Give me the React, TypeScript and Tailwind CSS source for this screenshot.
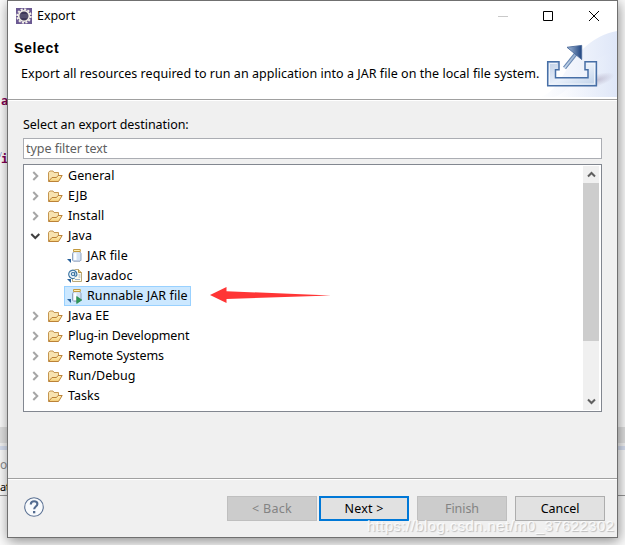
import React from "react";

const ui = "font-['Noto_Sans','Open_Sans',sans-serif]";

function Folder() {
  return (
    <svg width="16" height="14" viewBox="0 0 16 14" className="shrink-0">
      <defs>
        <linearGradient id="fold" x1="0" y1="0" x2="0" y2="1">
          <stop offset="0" stopColor="#fff0b8" />
          <stop offset="1" stopColor="#f5ce78" />
        </linearGradient>
      </defs>
      <path d="M1.5 12V3.5L2.8 2H6l1 1.5h4.5v4" fill="#f8e3b0" stroke="#c59650" strokeLinejoin="round" />
      <path d="M1.5 12.5 5 8.5h4.5L11 6.5h4.2L11.5 12.5Z" fill="url(#fold)" stroke="#bb8238" strokeLinejoin="round" />
    </svg>
  );
}

function Jar({ run = false }: { run?: boolean }) {
  return (
    <svg width="18" height="18" viewBox="0 0 18 18" className="shrink-0">
      <path d="M5.5 6.5 7 4.5h5.5l1.5 2v6.7l-1 1H6.5l-1-1Z" fill="#d5e3f5" stroke="#91a3bd" strokeLinejoin="round" />
      <path d="M8.3 6.2v6.8" stroke="#fff" strokeWidth="2.4" />
      <path d="M6.5 2.5h6.8v2H6.5z" fill="#fff1b5" stroke="#c29a40" />
      <path d="M0 12h4v4Z" fill="#27609b" />
      {run && <path d="M9.7 9.5V16.5L14.8 13Z" fill="#319a58" stroke="#23864b" strokeWidth=".7" />}
    </svg>
  );
}

function Javadoc() {
  return (
    <svg width="18" height="18" viewBox="0 0 18 18" className="shrink-0">
      <path d="M5.5 2.5h6l3 3v9h-9Z" fill="#fffbea" stroke="#b9a878" />
      <path d="M11.5 2.5v3h3" fill="#e7ca80" stroke="#b4924a" />
      <path d="M8 12.5h5M11.5 8h2M11.5 10h2" stroke="#9bb0ca" />
      <circle cx="6" cy="7" r="4.8" fill="#edf5fb" />
      <path d="M7.7 5.2v3.2c0 1.4 2.2 1.1 2.2-1a4.1 4.1 0 1 0-2 3.5" fill="none" stroke="#37719f" strokeWidth="1.1" />
      <circle cx="6" cy="7.1" r="1.6" fill="none" stroke="#37719f" strokeWidth="1.1" />
      <path d="M0 12h4v4Z" fill="#27609b" />
    </svg>
  );
}

function Chevron({ open = false }: { open?: boolean }) {
  return (
    <svg width="12" height="12" viewBox="0 0 12 12" className="shrink-0">
      <path
        d={open ? "M2.3 4l4 4 4-4" : "M4.3 2l4 4-4 4"}
        fill="none"
        stroke={open ? "#404040" : "#a6a6a6"}
        strokeWidth="2"
      />
    </svg>
  );
}

function Branch({ name, open }: { name: string; open?: boolean }) {
  return (
    <div className="flex h-5 items-center pl-[4px]">
      <Chevron open={open} />
      <div className="-mt-px ml-[6px] flex"><Folder /></div>
      <span className={"ml-[5px] " + (name.length > 10 ? "tracking-[-0.1px]" : "tracking-[0.05px]")}>{name}</span>
    </div>
  );
}

function Leaf({ name, icon, selected }: { name: string; icon: React.ReactNode; selected?: boolean }) {
  return (
    <div className="flex h-5 pl-[39px]">
      <div className={"flex h-5 items-center whitespace-nowrap border pl-[2px] " + (selected ? "w-[127px] border-[#99d1ff] bg-[#cce8ff]" : "border-transparent")}>
        {icon}
        <span className="ml-[2px] tracking-[0.07px]">{name}</span>
      </div>
    </div>
  );
}

function ExportBanner() {
  return (
    <svg width="78" height="68" viewBox="0 0 78 68" className="shrink-0">
      <defs>
        <linearGradient id="sweep" x1="0" y1="0" x2="1" y2="0">
          <stop offset="0" stopColor="#fff" />
          <stop offset="1" stopColor="#dfe7f8" />
        </linearGradient>
        <linearGradient id="tray" x1="0" y1="0" x2="1" y2="1">
          <stop offset="0" stopColor="#bfcfe6" />
          <stop offset=".5" stopColor="#e9f0fa" />
          <stop offset="1" stopColor="#bdd0e8" />
        </linearGradient>
        <linearGradient id="head" x1="0" y1="0" x2="1" y2="0">
          <stop offset="0" stopColor="#a9bfdb" />
          <stop offset="1" stopColor="#1f4480" />
        </linearGradient>
        <linearGradient id="shaft" gradientUnits="userSpaceOnUse" x1="25" y1="37" x2="38" y2="21">
          <stop offset="0" stopColor="#c9daec" />
          <stop offset="1" stopColor="#8ea9cb" />
        </linearGradient>
        <radialGradient id="trayShadow">
          <stop offset="0" stopColor="#a8a0b8" stopOpacity=".55" />
          <stop offset="1" stopColor="#a8a0b8" stopOpacity="0" />
        </radialGradient>
      </defs>
      <path d="M0 66C26 62 28 10 78 0V66Z" fill="url(#sweep)" />
      <path d="M15 66C38 59 44 25 78 21V66Z" fill="url(#sweep)" opacity=".75" />
      <ellipse cx="59" cy="49" rx="17" ry="6" transform="rotate(-18 59 49)" fill="url(#trayShadow)" />
      <path d="M8.7 30.7H20v8h-3.5v8h32.5v-8H46v-8h11.4v24H8.7Z" fill="url(#tray)" stroke="#476fa6" strokeWidth="1.5" />
      <path d="M10.5 53V32.5H18M47.5 32.5H55.5V53H10.5" fill="none" stroke="#f4f8fd" strokeOpacity=".8" />
      <path d="m25.5 37 12-15" stroke="#6887b3" strokeWidth="3.8" />
      <path d="m25.5 37 12-15" stroke="url(#shaft)" strokeWidth="1.8" />
      <path d="M28 16.3 42.7 14.4V28.5Z" fill="url(#head)" stroke="#49699a" strokeWidth=".9" />
    </svg>
  );
}

function Gear() {
  return (
    <svg width="16" height="16" viewBox="0 0 16 16">
      <path d="M0 0h16v16H0z" fill="#6b5992" />
      <circle cx="8" cy="8" r="6.7" fill="none" stroke="#f4f1e9" strokeWidth="2" strokeDasharray="2.1 1.4" />
      <circle cx="8" cy="8" r="5.3" fill="#3d3758" stroke="#f4f1e9" strokeWidth="1.6" />
      <path d="M4 7h8M4 9h8" stroke="#77718e" strokeWidth=".8" />
    </svg>
  );
}

function Action({ label, kind }: { label: string; kind: string }) {
  return (
    <button className={"flex h-[25px] w-[90px] items-center justify-center " + kind}>
      {label}
    </button>
  );
}

export default function App() {
  return (
    <div className={"relative h-[545px] w-[625px] overflow-hidden bg-[#f4f4f4] text-[12.5px] leading-5 tracking-[-0.05px] text-black " + ui}>
      {/* Editor window showing around the dialog */}
      <div className="absolute inset-0 flex flex-col">
        <div className="h-[427px] bg-[#fbfbfb]" />
        <div className="h-4 bg-[#e0e0e0]" />
        <div className="h-[3px] bg-[#f3f3f3]" />
        <div className="h-1 bg-[#d7dff0]" />
        <div className="h-[45px] bg-[#fbfbfb]" />
        <div className="h-px bg-[#969696]" />
        <div className="flex-1 bg-[#fbfbfb]" />
      </div>
      <span className="absolute left-[1px] top-[91px] font-['DejaVu_Sans_Mono',monospace] text-[12px] font-bold text-[#7f0055]">a</span>
      <svg className="absolute left-0 top-[152px]" width="2" height="6" viewBox="0 0 2 6"><path d="M0 5 1.5 0" stroke="#9fb4e8" /></svg>
      <span className="absolute left-[1px] top-[149px] font-['DejaVu_Sans_Mono',monospace] text-[12px] font-bold text-[#7f0055]">i</span>
      <span className="absolute left-0 top-[455px] text-[12px] text-[#8c8c8c]">o</span>
      <span className="absolute left-0 top-[477px] text-[11px] tracking-[-0.5px]">at</span>

      <main className="relative ml-[7px] flex h-[538px] w-[611px] flex-col border border-[#707070] bg-[#f0f0f0] shadow-[1px_3px_12px_rgba(0,0,0,0.45)]">
        <header className="flex h-[98px] shrink-0 bg-white">
          <div className="flex w-[531px] flex-col">
            <div className="flex h-[29px] items-center pl-2">
              <Gear />
              <span className="mt-px ml-[5px]">Export</span>
            </div>
            <h1 className="mt-[8px] h-5 pl-[6px] font-['Liberation_Sans',Arial,sans-serif] text-[14px] font-bold tracking-[0.7px]">Select</h1>
            <p className="mt-[6px] whitespace-nowrap pl-[13px] tracking-[0.035px]">Export all resources required to run an application into a JAR file on the local file system.</p>
          </div>
          <div className="flex w-[78px] flex-col">
            <div className="flex h-[30px] items-center justify-end pr-2">
              <svg width="120" height="28" viewBox="0 0 120 28" className="shrink-0" fill="none">
                <path d="M9 14.5h10" stroke="#c9c9c9" />
                <path d="M54.5 9.5h9v9h-9z" stroke="#000" />
                <path d="m100 9 10 10m0-10-10 10" stroke="#000" />
              </svg>
            </div>
            <ExportBanner />
          </div>
        </header>
        <div className="h-px shrink-0 bg-[#a0a0a0]" />
        <div className="h-px shrink-0 bg-white" />

        <section className="flex h-[377px] shrink-0 flex-col px-[15px] pt-[14px]">
          <label className="h-[23px]">Select an export destination:</label>
          <div className="flex h-[21px] items-center border border-[#abadb3] bg-white pl-[2px] text-[#606060]">type filter text</div>
          <div className="mt-[5px] flex h-[248px] border border-[#828790] bg-white p-px">
            <div className="relative flex-1">
              <Branch name="General" />
              <Branch name="EJB" />
              <Branch name="Install" />
              <Branch name="Java" open />
              <Leaf name="JAR file" icon={<Jar />} />
              <Leaf name="Javadoc" icon={<Javadoc />} />
              <Leaf name="Runnable JAR file" icon={<Jar run />} selected />
              <Branch name="Java EE" />
              <Branch name="Plug-in Development" />
              <Branch name="Remote Systems" />
              <Branch name="Run/Debug" />
              <Branch name="Tasks" />
              <svg className="absolute left-[185px] top-[120px]" width="122" height="18" viewBox="0 0 122 18">
                <path d="M0 9 16.5 1v4.2L121 9.5 16.5 13v4Z" fill="#ff3535" />
              </svg>
            </div>
            <div className="mr-px flex w-4 flex-col items-center bg-[#f0f0f0]">
              <div className="flex h-[17px] items-center">
                <svg width="9" height="7" viewBox="0 0 9 7"><path d="m1 5.5 3.5-3.5L8 5.5" fill="none" stroke="#606060" strokeWidth="2" /></svg>
              </div>
              <div className="h-[158px] w-full bg-[#cdcdcd]" />
              <div className="flex-1" />
              <div className="flex h-[17px] items-center">
                <svg width="9" height="7" viewBox="0 0 9 7"><path d="m1 1.5 3.5 3.5L8 1.5" fill="none" stroke="#606060" strokeWidth="2" /></svg>
              </div>
            </div>
          </div>
        </section>

        <div className="h-px shrink-0 bg-[#a0a0a0]" />
        <div className="h-px shrink-0 bg-white" />
        <footer className="flex pl-4 pr-3 pt-4">
          <svg width="20" height="20" viewBox="0 0 20 20" className="mt-[1px]" fill="none">
            <circle cx="10" cy="10" r="9.3" fill="#f8fafc" stroke="#5c7294" strokeWidth="1.1" />
            <path d="M6.8 7.4c0-2 1.3-3.1 3.3-3.1s3.3 1 3.3 2.7c0 2.5-3.2 2.5-3.2 5.2" stroke="#536b8f" strokeWidth="2.1" />
            <path d="M9 14h2.3v2.3H9z" fill="#536b8f" />
          </svg>
          <div className="ml-auto flex">
            <Action label="< Back" kind="border border-[#bfbfbf] bg-[#cccccc] text-[#838383] tracking-[0.3px]" />
            <Action label="Next >" kind="ml-[2px] border-2 border-[#0078d7] bg-[#e1e1e1] tracking-[0.2px]" />
            <Action label="Finish" kind="ml-2 border border-[#bfbfbf] bg-[#cccccc] text-[#838383]" />
            <Action label="Cancel" kind="ml-2 border border-[#adadad] bg-[#e1e1e1]" />
          </div>
        </footer>
      </main>
      <span className="absolute left-[367px] top-[516px] whitespace-nowrap font-['Liberation_Sans',Arial,sans-serif] text-[15px] tracking-[0.4px] text-white/80 [text-shadow:1px_1px_1px_rgba(0,0,0,0.22)]">https://blog.csdn.net/m0_37622302</span>
    </div>
  );
}
